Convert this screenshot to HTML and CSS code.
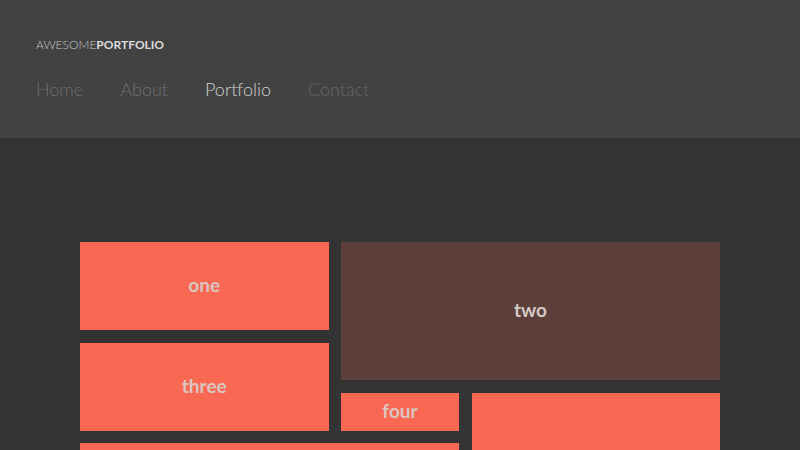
FILE: index.html
```html
<!DOCTYPE html>
<html lang="en">
<head>
<meta charset="utf-8">
<title>Awesome Portfolio</title>
<link rel="stylesheet" href="styles.css">
</head>
<body>
<header class="site-header">
  <div class="logo"><span class="logo-light">AWESOME</span><span class="logo-bold">PORTFOLIO</span></div>
  <nav class="nav">
    <a class="nav-link" href="#">Home</a>
    <a class="nav-link" href="#">About</a>
    <a class="nav-link active" href="#">Portfolio</a>
    <a class="nav-link dim" href="#">Contact</a>
  </nav>
</header>
<main class="content">
  <div class="grid">
    <div class="tile coral one">one</div>
    <div class="tile brown two">two</div>
    <div class="tile coral three">three</div>
    <div class="tile coral four">four</div>
    <div class="tile coral five"></div>
    <div class="tile coral six"></div>
  </div>
</main>
</body>
</html>
```
FILE: styles.css
```css
html, body {
  margin: 0;
  padding: 0;
  height: 100%;
  overflow: hidden;
}
body {
  background: #333333;
  font-family: "Lato", "Open Sans", sans-serif;
}
.site-header {
  background: #424242;
  height: 138px;
  box-sizing: border-box;
  padding: 37px 36px 0;
}
.logo {
  font-size: 12px;
  line-height: 16px;
  color: #c9c9c9;
}
.logo-light {
  font-weight: 300;
}
.logo-bold {
  font-weight: 700;
  color: #dcdcdc;
}
.nav {
  display: flex;
  gap: 37px;
  margin-top: 23px;
}
.nav-link {
  font-size: 18px;
  font-weight: 300;
  line-height: 26px;
  color: #6f6f6f;
  text-decoration: none;
}
.nav-link.active {
  color: #d0d0d0;
}
.nav-link.dim {
  color: #666666;
}
.content {
  padding: 104px 80px 0;
}
.grid {
  display: grid;
  grid-template-columns: repeat(5, 1fr);
  grid-auto-rows: 37.75px;
  gap: 12.5px;
}
.tile {
  display: flex;
  align-items: center;
  justify-content: center;
  box-sizing: border-box;
  padding-bottom: 3px;
  font-weight: 700;
  font-size: 19px;
  color: #d9c6c1;
}
.coral {
  background: #f96853;
}
.brown {
  background: #5c3f3a;
  color: #d6cac6;
}
.one {
  grid-column: 1 / 3;
  grid-row: 1 / 3;
}
.two {
  grid-column: 3 / 6;
  grid-row: 1 / 4;
}
.three {
  grid-column: 1 / 3;
  grid-row: 3 / 5;
}
.four {
  grid-column: 3 / 4;
  grid-row: 4 / 5;
}
.five {
  grid-column: 4 / 6;
  grid-row: 4 / 7;
}
.six {
  grid-column: 1 / 4;
  grid-row: 5 / 7;
}
```
